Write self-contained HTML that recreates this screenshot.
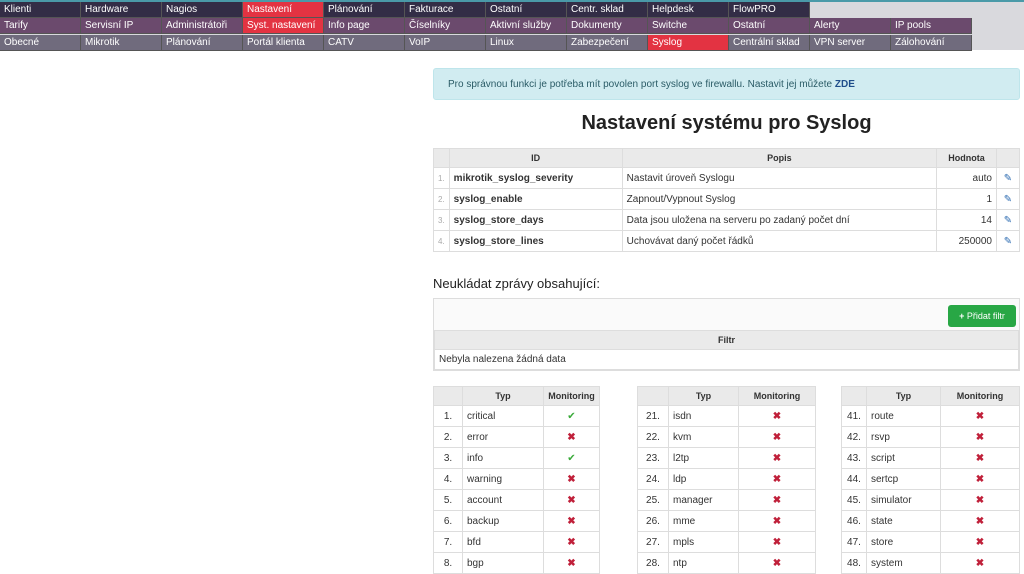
<!DOCTYPE html>
<html><head><meta charset="utf-8"><style>
*{box-sizing:border-box;margin:0;padding:0}
body{width:1024px;height:573px;overflow:hidden;background:#fff;font-family:"Liberation Sans",sans-serif;position:relative}
.nav{position:absolute;left:0;top:0;width:1024px;height:50px;background:#d9d9dd;border-top:2px solid #4a9aa8}
.c{position:absolute;width:81px;height:16px;font-size:10px;color:#fff;padding-left:4px;line-height:15px;border-right:1px solid #555;border-bottom:1px solid #555}
.r1{background:#332d46;top:0}
.r2{background:#6b4a6d;top:16px}
.r3{background:#706b7d;top:33px}
.act{background:#e33342}
.abs{position:absolute}
.info{left:433px;top:68px;width:587px;height:32px;background:#d1ecf1;border:1px solid #bee5eb;border-radius:3px;font-size:10px;color:#2a5b66;padding:10px 14px}
.info b{color:#1f4d8a}
h1{position:absolute;left:433px;width:587px;top:112px;text-align:center;font-size:20px;font-weight:bold;color:#222}
table{border-collapse:collapse;position:absolute;font-size:10px;color:#333;background:#fff}
td,th{border:1px solid #ddd;height:21px;padding:0 4px}
th{background:#eaeaea;height:19px;font-size:9px}
.n{color:#aaa;font-size:8px}
.ok{color:#3aaa3a;text-align:center}
.x{color:#c0203a;text-align:center;font-weight:bold}
.ed{color:#2a6ab0;text-align:center}
</style></head><body>
<div class="nav">
<div class="c r1" style="left:0">Klienti</div><div class="c r1" style="left:81px">Hardware</div><div class="c r1" style="left:162px">Nagios</div><div class="c r1 act" style="left:243px">Nastavení</div><div class="c r1" style="left:324px">Plánování</div><div class="c r1" style="left:405px">Fakturace</div><div class="c r1" style="left:486px">Ostatní</div><div class="c r1" style="left:567px">Centr. sklad</div><div class="c r1" style="left:648px">Helpdesk</div><div class="c r1" style="left:729px">FlowPRO</div>
<div class="c r2" style="left:0">Tarify</div><div class="c r2" style="left:81px">Servisní IP</div><div class="c r2" style="left:162px">Administrátoři</div><div class="c r2 act" style="left:243px">Syst. nastavení</div><div class="c r2" style="left:324px">Info page</div><div class="c r2" style="left:405px">Číselníky</div><div class="c r2" style="left:486px">Aktivní služby</div><div class="c r2" style="left:567px">Dokumenty</div><div class="c r2" style="left:648px">Switche</div><div class="c r2" style="left:729px">Ostatní</div><div class="c r2" style="left:810px">Alerty</div><div class="c r2" style="left:891px">IP pools</div>
<div class="c r3" style="left:0">Obecné</div><div class="c r3" style="left:81px">Mikrotik</div><div class="c r3" style="left:162px">Plánování</div><div class="c r3" style="left:243px">Portál klienta</div><div class="c r3" style="left:324px">CATV</div><div class="c r3" style="left:405px">VoIP</div><div class="c r3" style="left:486px">Linux</div><div class="c r3" style="left:567px">Zabezpečení</div><div class="c r3 act" style="left:648px">Syslog</div><div class="c r3" style="left:729px">Centrální sklad</div><div class="c r3" style="left:810px">VPN server</div><div class="c r3" style="left:891px">Zálohování</div>
</div>
<div class="abs info">Pro správnou funkci je potřeba mít povolen port syslog ve firewallu. Nastavit jej můžete <b>ZDE</b></div>
<h1>Nastavení systému pro Syslog</h1>
<table style="left:433px;top:148px;width:587px">
<tr><th style="width:14px"></th><th style="width:173px">ID</th><th>Popis</th><th style="width:60px">Hodnota</th><th style="width:23px"></th></tr>
<tr><td class="n">1.</td><td><b>mikrotik_syslog_severity</b></td><td>Nastavit úroveň Syslogu</td><td style="text-align:right">auto</td><td class="ed">✎</td></tr>
<tr><td class="n">2.</td><td><b>syslog_enable</b></td><td>Zapnout/Vypnout Syslog</td><td style="text-align:right">1</td><td class="ed">✎</td></tr>
<tr><td class="n">3.</td><td><b>syslog_store_days</b></td><td>Data jsou uložena na serveru po zadaný počet dní</td><td style="text-align:right">14</td><td class="ed">✎</td></tr>
<tr><td class="n">4.</td><td><b>syslog_store_lines</b></td><td>Uchovávat daný počet řádků</td><td style="text-align:right">250000</td><td class="ed">✎</td></tr>
</table>
<div class="abs" style="left:433px;top:276px;font-size:13px;color:#222">Neukládat zprávy obsahující:</div>
<div class="abs" style="left:433px;top:298px;width:587px;height:73px;border:1px solid #ddd;background:#fafafa"></div>
<div class="abs" style="left:948px;top:305px;width:68px;height:22px;background:#28a745;border-radius:3px;color:#fff;font-size:9px;line-height:22px;text-align:center"><b>+</b> Přidat filtr</div>
<table style="left:434px;top:330px;width:585px"><tr><th>Filtr</th></tr><tr><td style="height:20px">Nebyla nalezena žádná data</td></tr></table>
<table style="left:433px;top:386px;width:167px">
<tr><th style="width:29px"></th><th style="width:81px">Typ</th><th>Monitoring</th></tr>
<tr><td style="text-align:center">1.</td><td>critical</td><td class="ok">✔</td></tr>
<tr><td style="text-align:center">2.</td><td>error</td><td class="x">✖</td></tr>
<tr><td style="text-align:center">3.</td><td>info</td><td class="ok">✔</td></tr>
<tr><td style="text-align:center">4.</td><td>warning</td><td class="x">✖</td></tr>
<tr><td style="text-align:center">5.</td><td>account</td><td class="x">✖</td></tr>
<tr><td style="text-align:center">6.</td><td>backup</td><td class="x">✖</td></tr>
<tr><td style="text-align:center">7.</td><td>bfd</td><td class="x">✖</td></tr>
<tr><td style="text-align:center">8.</td><td>bgp</td><td class="x">✖</td></tr>
</table>
<table style="left:637px;top:386px;width:179px">
<tr><th style="width:31px"></th><th style="width:70px">Typ</th><th>Monitoring</th></tr>
<tr><td style="text-align:center">21.</td><td>isdn</td><td class="x">✖</td></tr>
<tr><td style="text-align:center">22.</td><td>kvm</td><td class="x">✖</td></tr>
<tr><td style="text-align:center">23.</td><td>l2tp</td><td class="x">✖</td></tr>
<tr><td style="text-align:center">24.</td><td>ldp</td><td class="x">✖</td></tr>
<tr><td style="text-align:center">25.</td><td>manager</td><td class="x">✖</td></tr>
<tr><td style="text-align:center">26.</td><td>mme</td><td class="x">✖</td></tr>
<tr><td style="text-align:center">27.</td><td>mpls</td><td class="x">✖</td></tr>
<tr><td style="text-align:center">28.</td><td>ntp</td><td class="x">✖</td></tr>
</table>
<table style="left:841px;top:386px;width:179px">
<tr><th style="width:25px"></th><th style="width:74px">Typ</th><th>Monitoring</th></tr>
<tr><td style="text-align:center">41.</td><td>route</td><td class="x">✖</td></tr>
<tr><td style="text-align:center">42.</td><td>rsvp</td><td class="x">✖</td></tr>
<tr><td style="text-align:center">43.</td><td>script</td><td class="x">✖</td></tr>
<tr><td style="text-align:center">44.</td><td>sertcp</td><td class="x">✖</td></tr>
<tr><td style="text-align:center">45.</td><td>simulator</td><td class="x">✖</td></tr>
<tr><td style="text-align:center">46.</td><td>state</td><td class="x">✖</td></tr>
<tr><td style="text-align:center">47.</td><td>store</td><td class="x">✖</td></tr>
<tr><td style="text-align:center">48.</td><td>system</td><td class="x">✖</td></tr>
</table>
</body></html>
